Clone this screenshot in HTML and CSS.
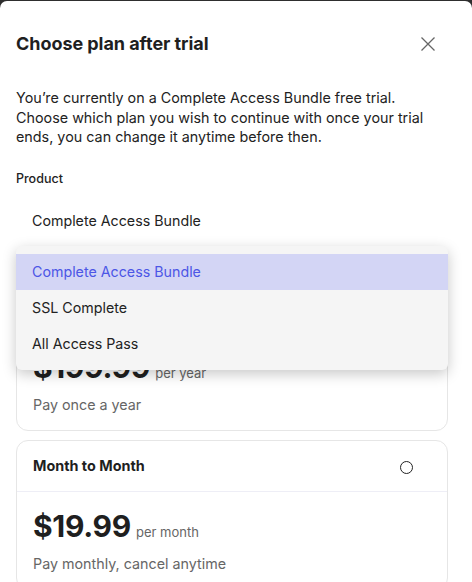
FILE: index.html
```html
<!DOCTYPE html>
<html lang="en">
<head>
<meta charset="utf-8">
<title>Choose plan after trial</title>
<link rel="stylesheet" href="styles.css">
</head>
<body>
<div class="modal">
  <header class="modal-header">
    <h1 class="title">Choose plan after trial</h1>
    <button class="close" aria-label="Close">
      <svg width="14" height="14" viewBox="0 0 14 14"><path d="M0.5 0.5L13.5 13.5M13.5 0.5L0.5 13.5" stroke="#666" stroke-width="1.3" fill="none"/></svg>
    </button>
  </header>
  <p class="intro">You’re currently on a Complete Access Bundle free trial. Choose which plan you wish to continue with once your trial ends, you can change it anytime before then.</p>
  <div class="field">
    <div class="label">Product</div>
    <div class="select-wrap">
      <div class="select">Complete Access Bundle</div>
      <ul class="menu">
        <li class="item active">Complete Access Bundle</li>
        <li class="item">SSL Complete</li>
        <li class="item">All Access Pass</li>
      </ul>
    </div>
  </div>
  <div class="plans">
    <div class="card">
      <div class="card-head"><span class="plan-name">Annual</span><span class="radio checked"></span></div>
      <div class="card-body">
        <div class="price"><span class="amount">$199.99</span><span class="per">per year</span></div>
        <div class="note">Pay once a year</div>
      </div>
    </div>
    <div class="card">
      <div class="card-head"><span class="plan-name">Month to Month</span><span class="radio"></span></div>
      <div class="card-body">
        <div class="price"><span class="amount">$19.99</span><span class="per">per month</span></div>
        <div class="note">Pay monthly, cancel anytime</div>
      </div>
    </div>
  </div>
</div>
</body>
</html>
```
FILE: styles.css
```css
* { box-sizing: border-box; }
html, body { margin: 0; padding: 0; }
body {
  background: #2e2e2e;
  font-family: Inter, "Noto Sans", sans-serif;
  color: #222;
  height: 582px;
  overflow: hidden;
  padding-top: 1px;
}
.modal {
  background: #fff;
  border-radius: 7px 7px 0 0;
  height: 581px;
  padding: 31px 24px 0 16px;
  overflow: hidden;
}
.modal-header {
  display: flex;
  align-items: center;
  justify-content: space-between;
  height: 24px;
}
.title {
  margin: 0;
  font-size: 18px;
  line-height: 24px;
  font-weight: 700;
  color: #1f1f1f;
  letter-spacing: -0.05px;
}
.close {
  border: 0;
  background: none;
  padding: 0;
  margin-right: 13px;
  width: 14px;
  height: 14px;
  display: flex;
}
.intro {
  margin: 32px 0 0;
  padding-right: 14px;
  font-size: 14.35px;
  line-height: 19.5px;
  color: #222;
}
.field { margin-top: 24px; }
.label {
  font-size: 12.5px;
  line-height: 16px;
  font-weight: 500;
  color: #222;
}
.select-wrap { position: relative; margin-top: 10px; }
.select {
  height: 48px;
  display: flex;
  align-items: center;
  padding-left: 16px;
  font-size: 14.25px;
  color: #222;
}
.menu {
  position: absolute;
  left: 0;
  right: 0;
  top: 49px;
  margin: 0;
  padding: 8px 0;
  list-style: none;
  background: #f5f5f5;
  border-radius: 6px;
  box-shadow: 0 4px 14px rgba(0,0,0,0.22);
  z-index: 5;
}
.item {
  height: 36px;
  display: flex;
  align-items: center;
  padding-left: 16px;
  font-size: 14.25px;
  color: #222;
}
.item.active {
  background: #d3d5f5;
  color: #4c56e6;
}
.plans {
  margin-top: 36px;
  display: flex;
  flex-direction: column;
  gap: 9px;
}
.card {
  border: 1px solid #e6e6e6;
  border-radius: 12px;
  background: #fff;
}
.card-head {
  height: 51px;
  display: flex;
  align-items: center;
  justify-content: space-between;
  padding: 0 34px 0 16px;
  border-bottom: 1px solid #eeeef6;
}
.plan-name {
  font-size: 14.4px;
  font-weight: 700;
  color: #1f1f1f;
}
.radio {
  width: 13px;
  height: 13px;
  border: 1.5px solid #222;
  border-radius: 50%;
  margin-top: 3px;
}
.radio.checked { border: 4px solid #4c56e6; }
.card-body { padding: 16px 16px 15px; }
.price {
  display: flex;
  align-items: baseline;
  gap: 5px;
  height: 36px;
}
.amount {
  font-size: 30px;
  line-height: 36px;
  font-weight: 700;
  color: #1f1f1f;
  letter-spacing: -0.3px;
}
.per {
  font-size: 13px;
  color: #666;
}
.note {
  margin-top: 10px;
  font-size: 14.3px;
  line-height: 20px;
  color: #666;
}
```
